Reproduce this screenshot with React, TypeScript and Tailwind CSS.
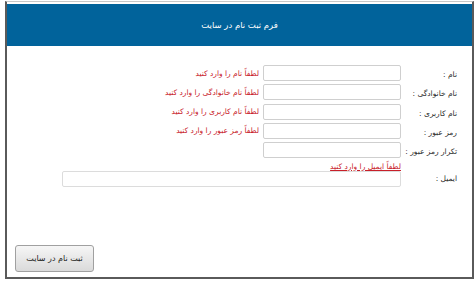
const rows = [
  { label: 'نام :', error: 'لطفاً نام را وارد کنید' },
  { label: 'نام خانوادگی :', error: 'لطفاً نام خانوادگی را وارد کنید' },
  { label: 'نام کاربری :', error: 'لطفاً نام کاربری را وارد کنید' },
  { label: 'رمز عبور :', error: 'لطفاً رمز عبور را وارد کنید' },
  { label: 'تکرار رمز عبور :', error: '' },
];

export default function App() {
  return (
    <div
      dir="rtl"
      className="w-[474px] h-[281px] bg-white pt-[1px] pl-[2px] text-[7.5px] text-[#2a2a2a]"
      style={{ fontFamily: '"DejaVu Sans", Tahoma, sans-serif' }}
    >
      <div className="w-[469px] h-[278px] border-t border-t-[#c8c8c8] border-x-2 border-b-2 border-x-[#5a5a5a] border-b-[#5a5a5a] pt-[2px] flex flex-col">
        {/* Header */}
        <div className="h-[42px] bg-[#01639b] flex items-center justify-center text-white text-[8.5px]">
          فرم ثبت نام در سایت
        </div>

        {/* Form rows */}
        <div className="flex flex-col pt-[17.5px]">
          {rows.map((r) => (
            <div key={r.label} className="flex items-center h-[19.25px]">
              <div className="w-[71px] pr-[15px] pt-[3px] shrink-0 whitespace-nowrap">{r.label}</div>
              <input
                type="text"
                className="w-[138px] h-[16px] border border-[#cfcfcf] rounded-[2px] bg-white shrink-0"
              />
              <div className="pr-[4px] text-[#c8202a] whitespace-nowrap">{r.error}</div>
            </div>
          ))}

          {/* Email row */}
          <div className="flex items-end mt-[2px]">
            <div className="w-[71px] pr-[15px] pb-[3px] shrink-0 whitespace-nowrap">ایمیل :</div>
            <div className="flex flex-col items-start">
              <span className="text-[#c8202a] underline leading-[9px]">لطفاً ایمیل را وارد کنید</span>
              <input
                type="text"
                className="w-[339px] h-[16px] border border-[#dcdcdc] rounded-[2px] bg-white"
              />
            </div>
          </div>
        </div>

        {/* Submit */}
        <div className="flex-1 flex items-end justify-end pl-[8px] pb-[5px]">
          <button className="w-[79px] h-[27px] border border-[#a0a0a0] rounded-[3px] bg-gradient-to-b from-[#f6f6f6] to-[#dadada] text-[#222] text-[8px]">
            ثبت نام در سایت
          </button>
        </div>
      </div>
    </div>
  );
}
